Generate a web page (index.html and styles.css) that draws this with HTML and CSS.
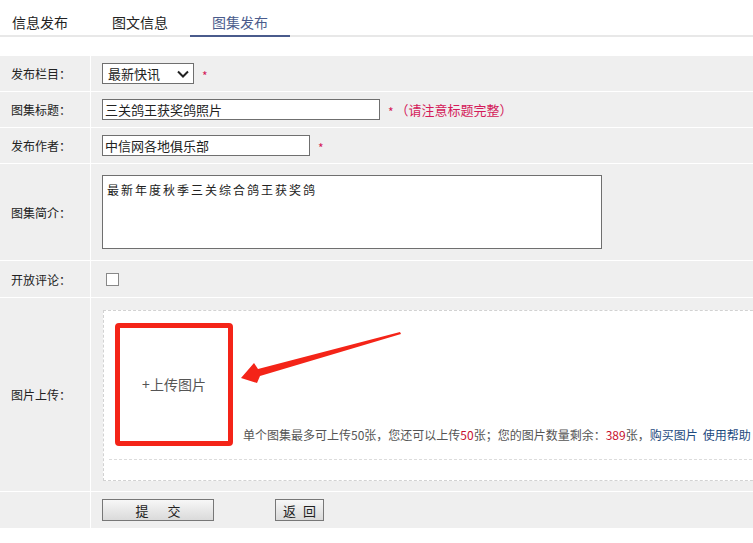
FILE: index.html
```html
<!DOCTYPE html>
<html lang="zh-CN">

<head>
  <meta charset="UTF-8">
  <meta name="viewport" content="width=device-width, initial-scale=1.0">
  <title>图集发布</title>
  <link rel="stylesheet" href="styles.css">
</head>

<body>
  <div class="tabs">
    <a class="tab">信息发布</a>
    <a class="tab">图文信息</a>
    <a class="tab active">图集发布</a>
  </div>

  <form class="form" method="post">
    <div class="label">发布栏目：</div>
    <div class="field">
      <span class="select-wrap">
        <select class="select">
          <option>最新快讯</option>
        </select>
        <svg class="chevron" width="12" height="8" viewBox="0 0 12 8">
          <path d="M1 1.5 L6 6.5 L11 1.5" fill="none" stroke="#222" stroke-width="2" />
        </svg>
      </span>
      <span class="req">*</span>
    </div>

    <div class="label">图集标题：</div>
    <div class="field">
      <input type="text" class="input input-title" value="三关鸽王获奖鸽照片">
      <span class="req">*</span>
      <span class="hint">（请注意标题完整）</span>
    </div>

    <div class="label">发布作者：</div>
    <div class="field">
      <input type="text" class="input input-author" value="中信网各地俱乐部">
      <span class="req">*</span>
    </div>

    <div class="label">图集简介：</div>
    <div class="field">
      <textarea class="textarea">最新年度秋季三关综合鸽王获奖鸽</textarea>
    </div>

    <div class="label">开放评论：</div>
    <div class="field">
      <input type="checkbox" class="checkbox">
    </div>

    <div class="label">图片上传：</div>
    <div class="field">
      <div class="upload">
        <div class="upload-top">
          <div class="upload-btn">+上传图片</div>
          <div class="upload-info">
            单个图集最多可上传50张，您还可以上传<span class="num">50</span>张；您的图片数量剩余：<span class="num">389</span>张，<a class="link">购买图片</a><a class="link">使用帮助</a>
          </div>
        </div>
        <div class="upload-line"></div>
        <svg class="arrow" width="170" height="60" viewBox="0 0 170 60">
          <polygon points="1,47 14,32 18,38 160,1 161,3 20,45 17,52" fill="#f42418" />
        </svg>
      </div>
    </div>

    <div class="label"></div>
    <div class="field">
      <button type="submit" class="btn btn-submit">提 交</button>
      <button type="button" class="btn btn-back">返 回</button>
    </div>
  </form>
</body>

</html>
```

FILE: styles.css
```css
body {
  margin: 0;
  font-family: "Noto Sans CJK SC", "Liberation Sans", sans-serif;
  font-size: 12px;
  color: #222;
  background: #fff;
  overflow: hidden;
}

.tabs {
  display: flex;
  margin-left: -10px;
  border-bottom: 2px solid #e8e8e8;
  margin-bottom: 19px;
}

.tab {
  width: 100px;
  height: 25px;
  padding-top: 10px;
  line-height: 25px;
  text-align: center;
  font-size: 14px;
  color: #222;
}

.tab.active {
  color: #4a5b8c;
  border-bottom: 2px solid #4a5b8c;
  margin-bottom: -2px;
}

.form {
  display: grid;
  grid-template-columns: 90px 1fr;
  grid-template-rows: 35px 35px 35px 96px 36px 193px 36px;
  gap: 1px;
  background: #fff;
}

.label {
  display: flex;
  align-items: center;
  padding-left: 11px;
  background: #efefef;
}

.field {
  display: flex;
  align-items: center;
  padding-left: 11px;
  background: #efefef;
  position: relative;
}

.select-wrap {
  position: relative;
  display: inline-flex;
}

.select {
  appearance: none;
  width: 92px;
  height: 21px;
  border: 1px solid #6f6f6f;
  border-radius: 0;
  background: #fff;
  padding: 0 0 0 5px;
  font-family: inherit;
  font-size: 13px;
  color: #222;
  box-sizing: border-box;
}

.chevron {
  position: absolute;
  right: 5px;
  top: 7px;
  pointer-events: none;
}

.req {
  color: #d41a5a;
  font-size: 12px;
  margin-left: 8px;
  padding-top: 4px;
}

.hint {
  color: #d41a5a;
  font-size: 13px;
  margin-left: 2px;
}

.input {
  height: 21px;
  border: 1px solid #6f6f6f;
  padding: 0 2px;
  font-family: inherit;
  font-size: 13px;
  color: #222;
  box-sizing: border-box;
  background: #fff;
}

.input-title {
  width: 278px;
}

.input-author {
  width: 208px;
}

.textarea {
  width: 500px;
  height: 74px;
  border: 1px solid #6f6f6f;
  padding: 5px 4px;
  font-family: inherit;
  font-size: 12px;
  letter-spacing: 2px;
  color: #222;
  box-sizing: border-box;
  resize: none;
}

.checkbox {
  appearance: none;
  width: 13px;
  height: 13px;
  margin: 1px 0 0 4px;
  border: 1px solid #888;
  background: #fff;
}

.upload {
  position: relative;
  width: 680px;
  height: 171px;
  margin-left: 1px;
  margin-top: 1px;
  border: 1px dashed #d2d2d2;
  background: #fff;
  box-sizing: border-box;
  padding: 12px 0 0 11px;
}

.upload-top {
  display: flex;
}

.upload-btn {
  width: 118px;
  height: 123px;
  border: 5px solid #f42418;
  border-radius: 4px;
  box-sizing: border-box;
  display: flex;
  align-items: center;
  justify-content: center;
  font-size: 14px;
  color: #555;
  flex-shrink: 0;
}

.upload-info {
  align-self: flex-end;
  margin: 0 0 3px 10px;
  color: #555;
  white-space: nowrap;
  line-height: 16px;
}

.num {
  color: #c8102e;
}

.link {
  color: #1d4a7e;
  margin-right: 5px;
}

.upload-line {
  margin: 13px 0 0 -6px;
  border-top: 1px dashed #dcdcdc;
}

.arrow {
  position: absolute;
  left: 136px;
  top: 20px;
}

.btn {
  height: 22px;
  border: 1px solid #777;
  border-radius: 0;
  background: linear-gradient(#f7f7f7, #dadada);
  font-family: inherit;
  font-size: 13px;
  color: #222;
  padding: 0;
  box-sizing: border-box;
}

.btn-submit {
  width: 112px;
  letter-spacing: 8px;
  text-indent: 8px;
}

.btn-back {
  width: 49px;
  margin-left: 61px;
  letter-spacing: 2px;
  text-indent: 2px;
}
```
